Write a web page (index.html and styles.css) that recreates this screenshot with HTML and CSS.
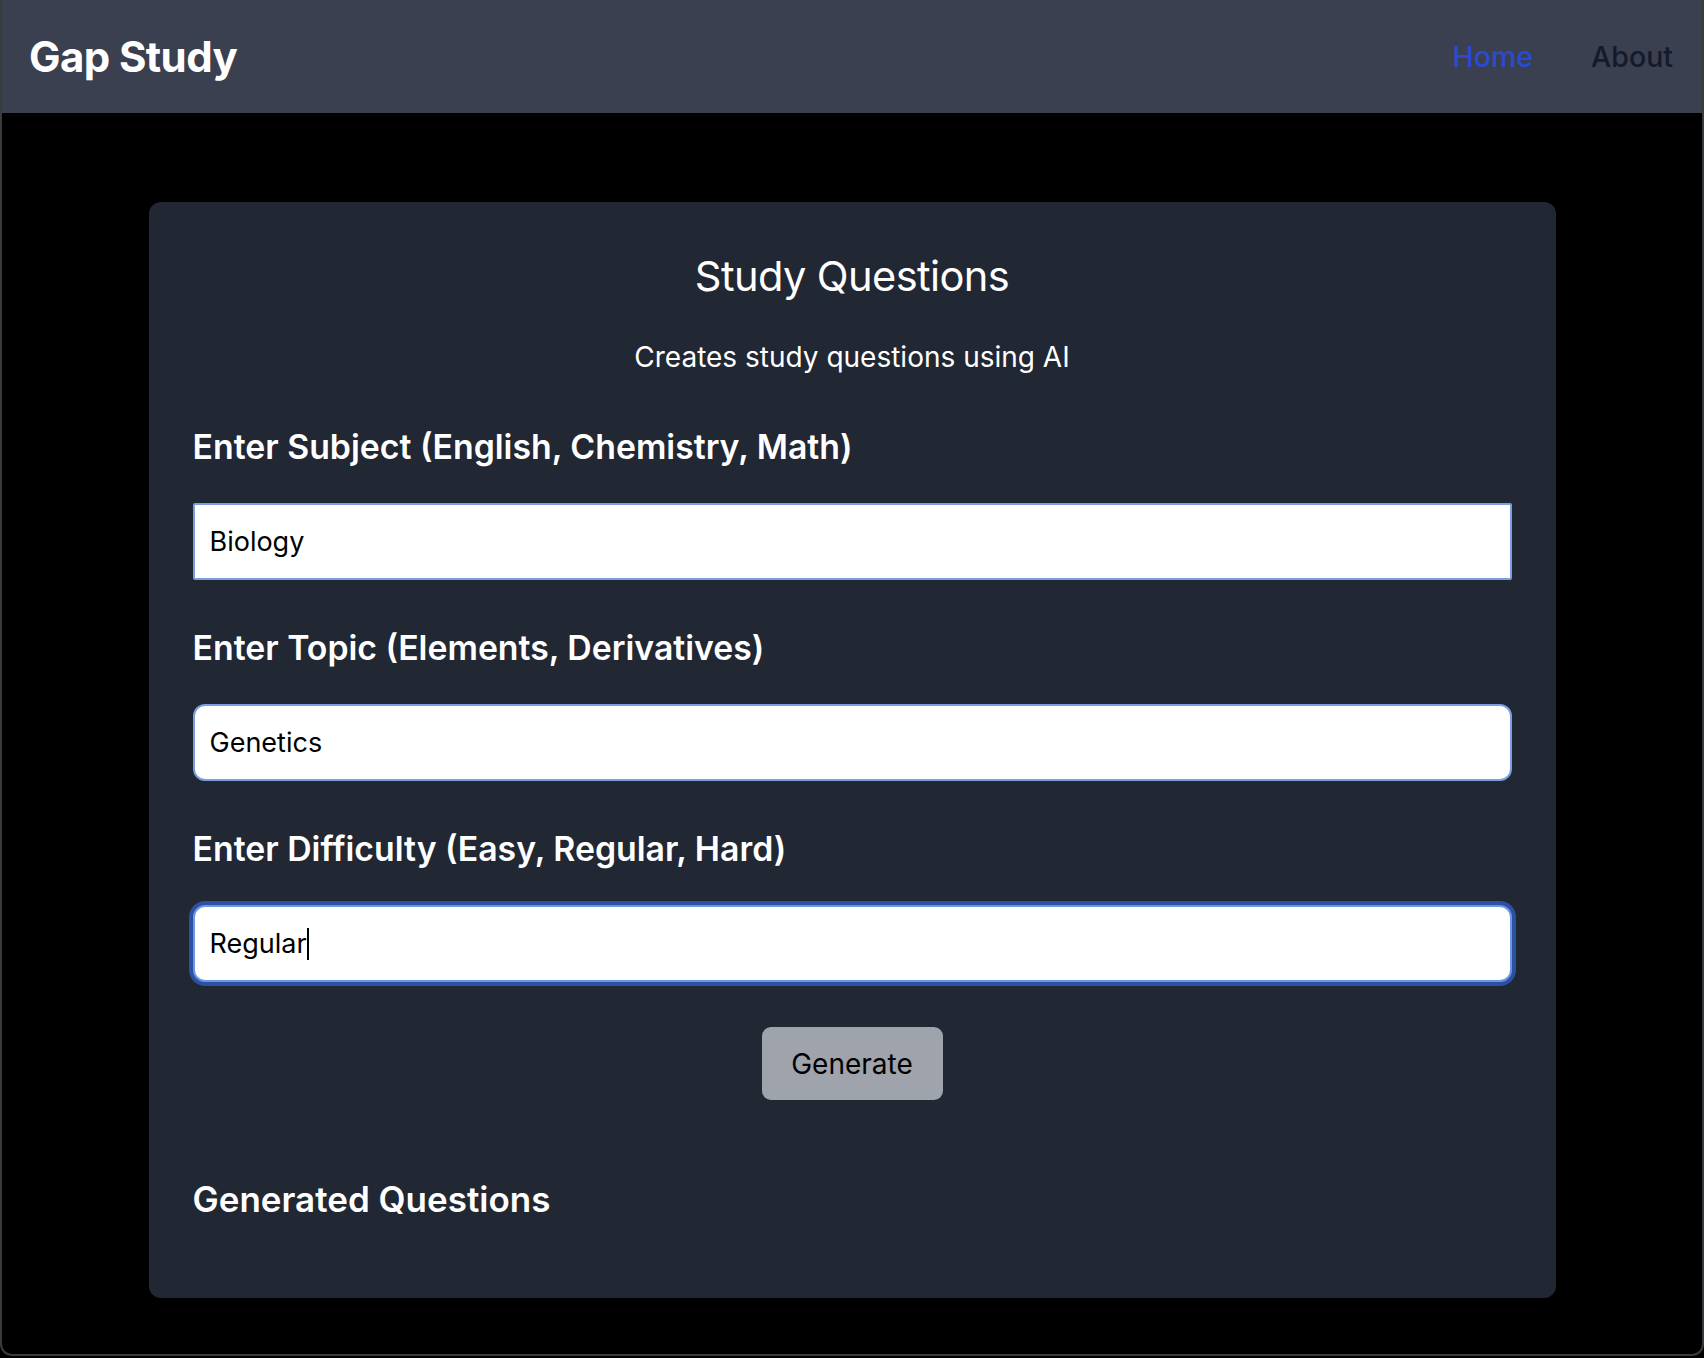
FILE: index.html
```html
<!DOCTYPE html>
<html lang="en">

<head>
    <meta charset="UTF-8">
    <meta name="viewport" content="width=device-width, initial-scale=1.0">
    <title>Gap Study</title>
    <link rel="stylesheet" href="styles.css">
</head>

<body>

    <div class="window">
        <nav class="navbar">
            <a href="#" class="brand">Gap Study</a>
            <div class="nav-links">
                <a href="#" class="nav-link active">Home</a>
                <a href="#" class="nav-link">About</a>
            </div>
        </nav>

        <main class="main">
            <div class="card">
                <h1 class="title">Study Questions</h1>
                <p class="subtitle">Creates study questions using AI</p>

                <form id="studyForm" class="study-form">
                    <div class="form-group">
                        <label for="subject">Enter Subject (English, Chemistry, Math)</label>
                        <input type="text" id="subject" name="subject" class="input input-square" value="Biology">
                    </div>

                    <div class="form-group">
                        <label for="topic">Enter Topic (Elements, Derivatives)</label>
                        <input type="text" id="topic" name="topic" class="input" value="Genetics">
                    </div>

                    <div class="form-group">
                        <label for="difficulty">Enter Difficulty (Easy, Regular, Hard)</label>
                        <div class="input-wrap">
                            <input type="text" id="difficulty" name="difficulty" class="input input-focus" value="Regular">
                            <div class="caret-layer"><span class="ghost">Regular</span><span class="caret"></span></div>
                        </div>
                    </div>

                    <div class="actions">
                        <button type="button" class="btn">Generate</button>
                    </div>
                </form>

                <h2 class="output-title">Generated Questions</h2>
                <div id="output" class="output"></div>
            </div>
        </main>
    </div>

</body>

</html>
```

FILE: styles.css
```css
* {
    box-sizing: border-box;
}

body {
    margin: 0;
    padding: 0;
    background-color: #000;
    font-family: Inter, "Noto Sans", Arial, sans-serif;
}

.window {
    height: 1356px;
    background-color: #000;
    border: 2px solid #3a3b3d;
    border-top: none;
    border-radius: 0 0 12px 12px;
    overflow: hidden;
}

.navbar {
    height: 113px;
    background-color: #3a4050;
    display: flex;
    justify-content: space-between;
    align-items: center;
    padding: 0 29px 0 27px;
}

.brand {
    color: #fff;
    font-size: 42px;
    font-weight: 700;
    letter-spacing: -0.6px;
    text-decoration: none;
}

.nav-links {
    display: flex;
    gap: 58px;
}

.nav-link {
    color: #141a29;
    font-size: 28.5px;
    font-weight: 500;
    text-decoration: none;
}

.nav-link.active {
    color: #2a4bd0;
}

.main {
    padding: 89px 0 0;
}

.card {
    width: 1407px;
    margin: 0 auto;
    background-color: #212733;
    border-radius: 12px;
    padding: 44px;
    color: #fff;
}

.title {
    margin: 0;
    font-size: 41.6px;
    font-weight: 400;
    line-height: 60px;
    text-align: center;
    letter-spacing: -0.6px;
}

.subtitle {
    margin: 31px 0 0;
    font-size: 28px;
    line-height: 40px;
    text-align: center;
}

.study-form {
    margin-top: 48px;
}

.form-group {
    margin-bottom: 46px;
}

label {
    display: block;
    font-size: 33.8px;
    font-weight: 600;
    line-height: 44px;
    margin-bottom: 34px;
}

.input {
    display: block;
    width: 100%;
    height: 77px;
    padding: 0 15px;
    border: 2px solid #7b9edf;
    border-radius: 12px;
    background-color: #fff;
    font-family: Inter, "Noto Sans", Arial, sans-serif;
    font-size: 27px;
    color: #000;
    outline: none;
}

.input-square {
    border-radius: 2px;
}

.input-focus {
    border-color: #6d97e2;
    box-shadow: 0 0 0 4px #2c51a3;
}

.input-wrap {
    position: relative;
}

.caret-layer {
    position: absolute;
    top: 0;
    left: 0;
    height: 77px;
    padding: 0 17px;
    display: flex;
    align-items: center;
    font-size: 27px;
    pointer-events: none;
}

.ghost {
    visibility: hidden;
}

.caret {
    width: 2px;
    height: 32px;
    background-color: #000;
}

.actions {
    display: flex;
    justify-content: center;
    margin-top: -1px;
}

.btn {
    width: 181px;
    height: 73px;
    border: none;
    border-radius: 9px;
    background-color: #9fa3ab;
    color: #000;
    font-family: Inter, "Noto Sans", Arial, sans-serif;
    font-size: 28px;
    cursor: pointer;
}

.output-title {
    margin: 74px 0 0;
    font-size: 35px;
    font-weight: 600;
    line-height: 50px;
}

.output {
    min-height: 30px;
}
```
